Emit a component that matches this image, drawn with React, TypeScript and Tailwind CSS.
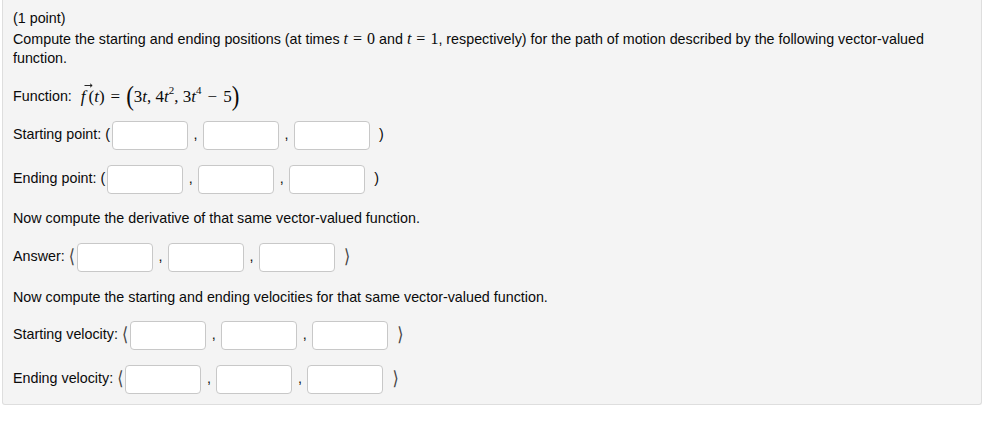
import React from "react";

const sans = { fontFamily: '"Liberation Sans", Arial, Helvetica, sans-serif' };
const serif = { fontFamily: '"Liberation Serif", "Times New Roman", serif' };
const angleFont = { fontFamily: '"DejaVu Sans", sans-serif' };

function Box() {
  return (
    <input
      type="text"
      className="w-[76px] h-[29px] shrink-0 rounded-[4px] border border-[#c8c8c8] bg-white outline-none"
    />
  );
}

function Row({ label, open, close }: { label: string; open: string; close: string }) {
  const angle = open === "⟨";
  return (
    <div className="flex items-center h-[29px]">
      <span className="whitespace-pre">{label} </span>
      <span
        className={angle ? "text-[16px] text-[#444] inline-block scale-y-[1.2]" : ""}
        style={angle ? angleFont : undefined}
      >
        {open}
      </span>
      <span className="w-[2px] shrink-0" />
      <Box />
      <span className="w-[15px] text-center shrink-0">,</span>
      <Box />
      <span className="w-[15px] text-center shrink-0">,</span>
      <Box />
      <span
        className={"ml-[9px] " + (angle ? "text-[16px] text-[#444] inline-block scale-y-[1.2]" : "")}
        style={angle ? angleFont : undefined}
      >
        {close}
      </span>
    </div>
  );
}

function T() {
  return (
    <span className="italic text-[16px]" style={serif}>
      t
    </span>
  );
}

export default function App() {
  return (
    <div className="w-[990px] h-[427px] bg-white text-[14.3px] text-[#0a0a0a]" style={sans}>
      <div className="ml-[2px] w-[980px] bg-[#f4f4f4] border-x border-b border-[#dedede] rounded-b-[3px] px-[10px] pt-[9px] pb-[10px]">
        <div className="leading-[19.5px]">
          <div>(1 point)</div>
          <div>
            Compute the starting and ending positions (at times <T />
            <span className="text-[16px] mx-[5px]" style={serif}>
              =
            </span>
            <span className="text-[16px]" style={serif}>
              0
            </span>{" "}
            and <T />
            <span className="text-[16px] mx-[5px]" style={serif}>
              =
            </span>
            <span className="text-[16px]" style={serif}>
              1
            </span>
            , respectively) for the path of motion described by the following vector-valued
            <br />
            function.
          </div>
        </div>

        <div className="mt-[16px] h-[24px] flex items-center">
          <span className="whitespace-pre">Function: </span>
          <span className="text-[17px] flex items-center" style={serif}>
            <span className="relative inline-block italic ml-[5px]">
              f
              <svg className="absolute left-[3px] top-[-1px]" width="9" height="5" viewBox="0 0 9 5">
                <path d="M0.5 2.5 H8 M6 0.8 L8.2 2.5 L6 4.2" stroke="#111" strokeWidth="0.9" fill="none" />
              </svg>
            </span>
            <span className="ml-[3px]">(</span>
            <span className="italic">t</span>
            <span>)</span>
            <span className="mx-[6px]">=</span>
            <span className="text-[23px] leading-none inline-block scale-y-[1.15]">(</span>
            <span>3</span>
            <span className="italic">t</span>
            <span>,&nbsp;4</span>
            <span className="italic">t</span>
            <sup className="text-[11px] top-[-7px]">2</sup>
            <span>,&nbsp;3</span>
            <span className="italic">t</span>
            <sup className="text-[11px] top-[-7px]">4</sup>
            <span className="mx-[6px]">−</span>
            <span>5</span>
            <span className="text-[23px] leading-none inline-block scale-y-[1.15]">)</span>
          </span>
        </div>

        <div className="mt-[12px]">
          <Row label="Starting point:" open="(" close=")" />
        </div>
        <div className="mt-[15px]">
          <Row label="Ending point:" open="(" close=")" />
        </div>

        <div className="mt-[14px] h-[20px] leading-[20px]">
          Now compute the derivative of that same vector-valued function.
        </div>
        <div className="mt-[15px]">
          <Row label="Answer:" open="⟨" close="⟩" />
        </div>

        <div className="mt-[15px] h-[20px] leading-[20px]">
          Now compute the starting and ending velocities for that same vector-valued function.
        </div>
        <div className="mt-[14px]">
          <Row label="Starting velocity:" open="⟨" close="⟩" />
        </div>
        <div className="mt-[15px]">
          <Row label="Ending velocity:" open="⟨" close="⟩" />
        </div>
      </div>
    </div>
  );
}
